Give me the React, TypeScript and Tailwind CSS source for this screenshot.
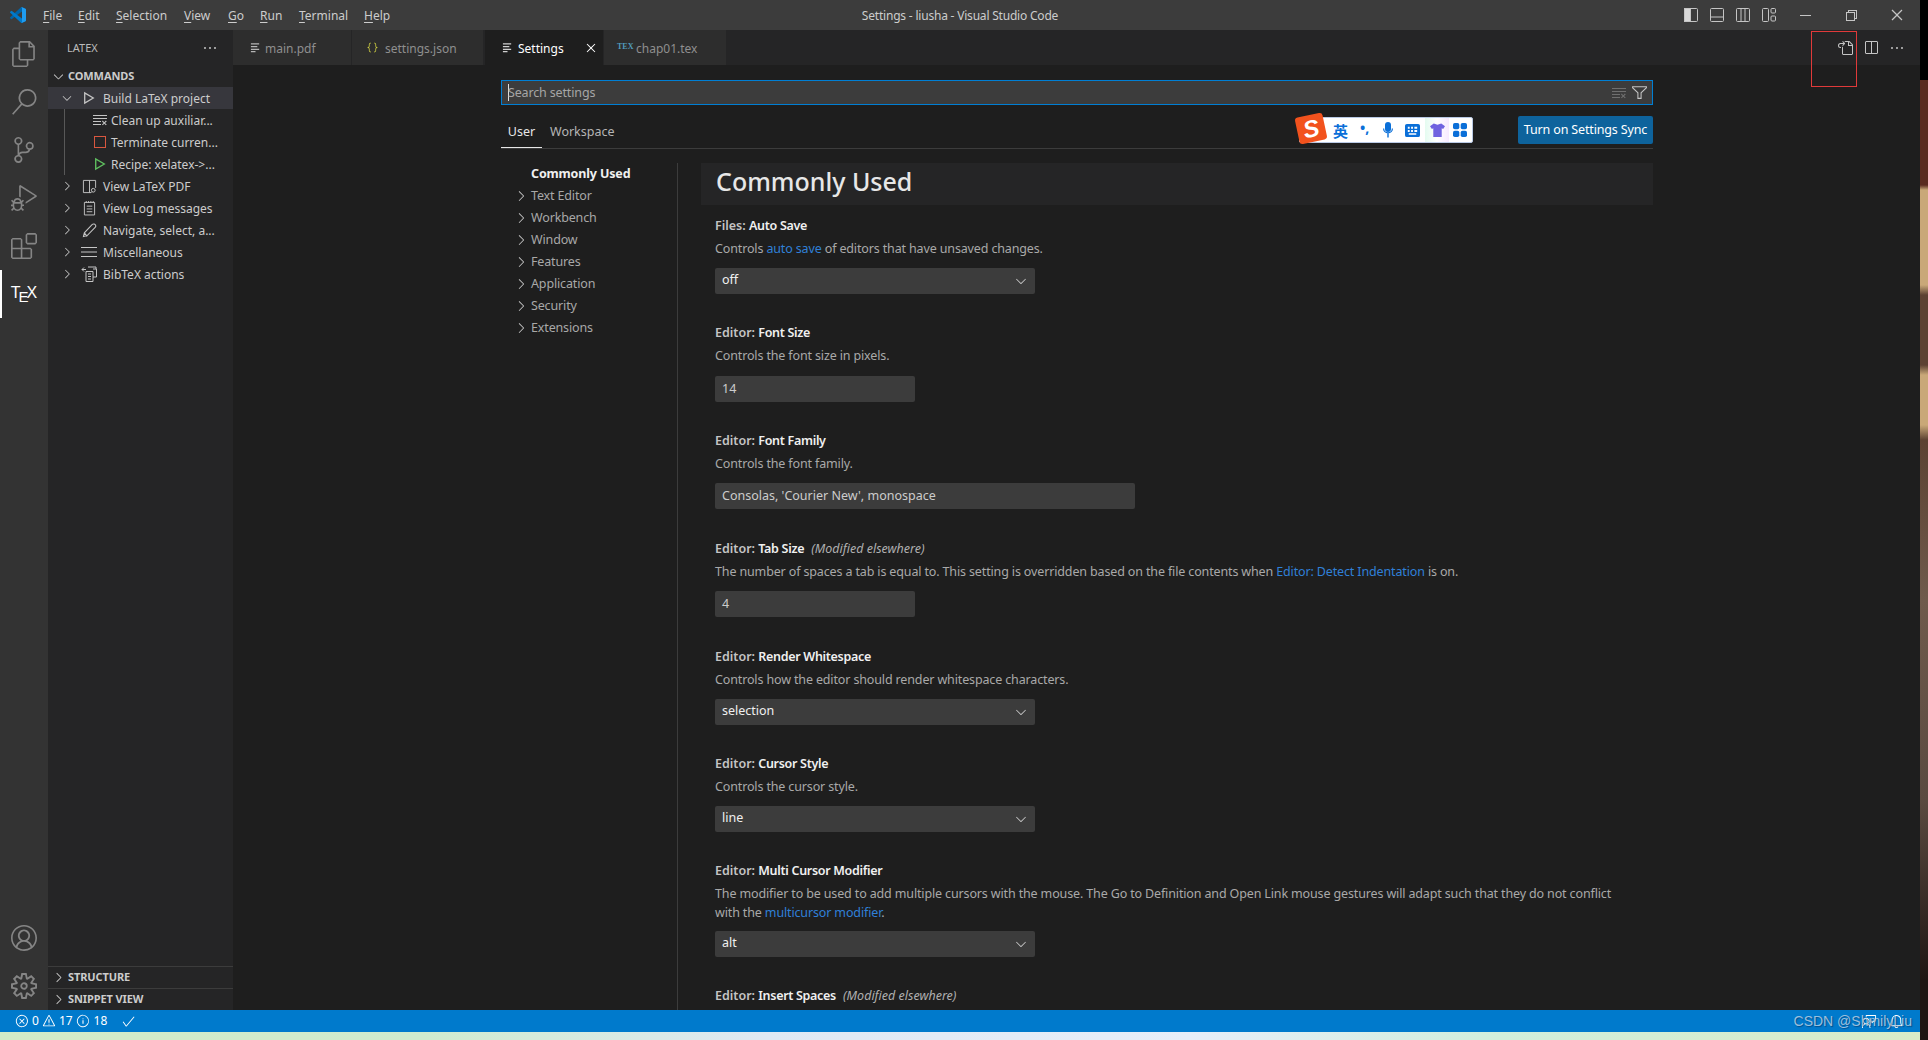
import React from "react";
import {
  VscFiles, VscSearch, VscSourceControl, VscDebugAlt, VscExtensions, VscAccount, VscSettingsGear,
  VscChevronRight, VscChevronDown, VscEllipsis, VscClose, VscChromeMinimize, VscChromeRestore, VscChromeClose,
  VscSplitHorizontal, VscGoToFile,
  VscFilter, VscClearAll, VscError, VscWarning, VscInfo, VscCheck, VscJson, VscFeedback, VscBell,
} from "react-icons/vsc";

const font = "font-['Noto_Sans','Open_Sans',sans-serif]";

function Logo() {
  return (
    <svg viewBox="0 0 100 100" className="w-4 h-4">
      <path fill="#0065A9" d="M96.46 10.8 75.86.88a6.23 6.23 0 0 0-7.1 1.2L1.3 63.6a4.16 4.16 0 0 0 0 6.16l5.5 5a4.16 4.16 0 0 0 5.32.24L93.3 14.37c2.73-2.07 6.64-.12 6.64 3.3v-.24c0-2.4-1.37-4.58-3.48-5.63Z" />
      <path fill="#007ACC" d="M96.46 89.2 75.86 99.12a6.23 6.23 0 0 1-7.1-1.2L1.3 36.4a4.16 4.16 0 0 1 0-6.16l5.5-5a4.16 4.16 0 0 1 5.32-.24L93.3 85.63c2.73 2.07 6.64.12 6.64-3.3v.24c0 2.4-1.37 4.58-3.48 5.63Z" />
      <path fill="#1F9CF0" d="M75.86 99.13a6.22 6.22 0 0 1-7.1-1.2c2.3 2.3 6.24.67 6.24-2.58V4.65c0-3.25-3.94-4.88-6.24-2.58a6.22 6.22 0 0 1 7.1-1.2l20.6 9.9A6.25 6.25 0 0 1 100 16.4v67.2a6.25 6.25 0 0 1-3.54 5.63l-20.6 9.9Z" />
    </svg>
  );
}

function Menu({ k, rest, className }: { k: string; rest: string; className: string }) {
  return (
    <span className={className}>
      <span className="underline underline-offset-2">{k}</span>
      {rest}
    </span>
  );
}

const LayoutSvg = ({ children }: { children: React.ReactNode }) => (
  <svg viewBox="0 0 16 16" className="w-[16px] h-[16px]" fill="none" stroke="#c5c5c5" strokeWidth="1">
    {children}
  </svg>
);

function TitleBar() {
  return (
    <div className="h-[30px] shrink-0 bg-[#3c3c3c] grid grid-cols-[1fr_auto_1fr] items-center text-[#cccccc] text-[12px]">
      <div className="flex items-center">
        <div className="w-[43px] flex justify-start pl-[10px]"><Logo /></div>
        <div className="flex pt-[1px]">
          <Menu k="F" rest="ile" className="w-[35px]" />
          <Menu k="E" rest="dit" className="w-[38px]" />
          <Menu k="S" rest="election" className="w-[68px]" />
          <Menu k="V" rest="iew" className="w-[44px]" />
          <Menu k="G" rest="o" className="w-[32px]" />
          <Menu k="R" rest="un" className="w-[39px]" />
          <Menu k="T" rest="erminal" className="w-[65px]" />
          <Menu k="H" rest="elp" className="w-[40px]" />
        </div>
      </div>
      <div className="text-[12px] tracking-[-0.2px] pt-[1px]">Settings - liusha - Visual Studio Code</div>
      <div className="flex justify-end items-center text-[#c5c5c5]">
        <span className="w-[26px] flex justify-center">
          <LayoutSvg><rect x="1.5" y="1.5" width="13" height="13" rx="1" /><rect x="1.5" y="1.5" width="6" height="13" fill="#d8d8d8" /></LayoutSvg>
        </span>
        <span className="w-[26px] flex justify-center">
          <LayoutSvg><rect x="1.5" y="1.5" width="13" height="13" rx="1" /><path d="M1.5 10h13" /></LayoutSvg>
        </span>
        <span className="w-[26px] flex justify-center">
          <LayoutSvg><rect x="1.5" y="1.5" width="13" height="13" rx="1" /><path d="M10 1.5v13M6 1.5v13" /></LayoutSvg>
        </span>
        <span className="w-[26px] flex justify-center">
          <LayoutSvg><rect x="1.5" y="1.5" width="6" height="13" rx="1" /><rect x="10" y="1.5" width="4.5" height="4.5" rx="1" /><rect x="10" y="9" width="4.5" height="5" rx="1" /></LayoutSvg>
        </span>
        <span className="w-[46px] flex justify-center"><VscChromeMinimize size={16} /></span>
        <span className="w-[46px] flex justify-center"><VscChromeRestore size={16} /></span>
        <span className="w-[46px] flex justify-center"><VscChromeClose size={16} /></span>
      </div>
    </div>
  );
}

function ActivityBar() {
  const top = [VscFiles, VscSearch, VscSourceControl, VscDebugAlt, VscExtensions];
  return (
    <div className="w-[48px] shrink-0 bg-[#333333] flex flex-col text-[#858585]">
      {top.map((I, i) => (
        <div key={i} className="h-[48px] flex items-center justify-center"><I size={26} /></div>
      ))}
      <div className="h-[48px] border-l-2 border-white flex items-center justify-center text-white font-['Liberation_Sans',sans-serif] text-[16px] pr-[2px] pb-[2px]">
        <span>T</span>
        <span className="translate-y-[4px] -ml-[2px] text-[15px]">E</span>
        <span className="-ml-[2px]">X</span>
      </div>
      <div className="flex-1" />
      <div className="h-[48px] flex items-center justify-center"><VscAccount size={26} /></div>
      <div className="h-[48px] flex items-center justify-center"><VscSettingsGear size={26} /></div>
    </div>
  );
}

const BuildIcon = () => (
  <svg viewBox="0 0 14 16" className="w-[12px] h-[14px]" fill="none" stroke="#c5c5c5" strokeWidth="1.5">
    <path d="M2 2v12l10-6z" />
  </svg>
);
const StopIcon = () => <div className="w-[12px] h-[12px] border-[1.5px] border-[#d9573f]" />;
const PlayGreen = () => (
  <svg viewBox="0 0 14 16" className="w-[12px] h-[14px]" fill="none" stroke="#5fbf5f" strokeWidth="1.6">
    <path d="M2 2v12l10-6z" />
  </svg>
);
const PdfIcon = () => (
  <svg viewBox="0 0 16 16" className="w-[15px] h-[15px]" fill="none" stroke="#c5c5c5" strokeWidth="1">
    <path d="M1.5 1.5h13v8M1.5 1.5v13h8M8 1.5v13" />
    <circle cx="12" cy="12" r="2" />
    <path d="M10.5 13.5l-1.5 1.5" />
  </svg>
);
const LogIcon = () => (
  <svg viewBox="0 0 14 16" className="w-[13px] h-[16px]" fill="none" stroke="#c5c5c5" strokeWidth="1">
    <path d="M1.5 2h11v13.5h-11zM3.5 0.5v2M6 .5v2M8.5.5v2M11 .5v2M4 6h6M4 9h6M4 12h6" />
  </svg>
);
const PenIcon = () => (
  <svg viewBox="0 0 16 16" className="w-[15px] h-[15px]" fill="none" stroke="#c5c5c5" strokeWidth="1.1">
    <path d="M1.5 14.5l1-4 8.5-9c1-.8 2.6-.4 3.2.4.6.8.6 2-.2 2.8l-8.5 8.8zM2.5 10.5l3 3.8" />
  </svg>
);
const MiscIcon = () => (
  <svg viewBox="0 0 16 16" className="w-[16px] h-[16px]" fill="none" stroke="#c5c5c5" strokeWidth="1">
    <path d="M0 3.5h16M0 8h16M0 12.5h16" />
  </svg>
);
const BibIcon = () => (
  <svg viewBox="0 0 16 16" className="w-[16px] h-[16px]" fill="none" stroke="#c5c5c5" strokeWidth="1">
    <path d="M5 5.5h7v10H5zM7 8h3M7 10.5h3M7 13h3M12 3h3.5v8H12M5 3.5H1M3 1.5l-2 2 2 2M7 1h8v2" />
  </svg>
);

function Row({ icon, label, open, level2, active }: { icon: React.ReactNode; label: string; open?: boolean; level2?: boolean; active?: boolean }) {
  return (
    <div className={`h-[22px] flex items-center text-[#cccccc] text-[12px] whitespace-nowrap ${active ? "bg-[#37373d]" : ""}`}>
      {level2 ? (
        <>
          <span className="w-[40px] shrink-0" />
          <span className="w-[23px] shrink-0 flex justify-center">{icon}</span>
        </>
      ) : (
        <>
          <span className="w-[12px] shrink-0" />
          <span className="w-[14px] shrink-0 flex justify-center text-[#c5c5c5]">
            {open ? <VscChevronDown size={16} /> : <VscChevronRight size={16} />}
          </span>
          <span className="w-[29px] shrink-0 flex justify-center pl-[1px]">{icon}</span>
        </>
      )}
      <span className="pt-[1px]">{label}</span>
    </div>
  );
}

function SectionHead({ label, open }: { label: string; open?: boolean }) {
  return (
    <div className="h-[22px] flex items-center text-[#cccccc] text-[11px] font-bold tracking-[-0.1px]">
      <span className="w-[20px] shrink-0 flex justify-end pr-[2px]">
        {open ? <VscChevronDown size={15} /> : <VscChevronRight size={15} />}
      </span>
      <span>{label}</span>
    </div>
  );
}

function SideBar() {
  return (
    <div className="w-[185px] shrink-0 bg-[#252526] flex flex-col">
      <div className="h-[35px] shrink-0 flex items-center justify-between pl-[19px] pr-[15px] text-[#bbbbbb] text-[11px]">
        <span className="pt-[1px]">LATEX</span>
        <VscEllipsis size={16} className="text-[#c5c5c5]" />
      </div>
      <div className="flex-1 relative">
        <SectionHead label="COMMANDS" open />
        <Row active open icon={<BuildIcon />} label="Build LaTeX project" />
        <div className="ml-[16px] border-l border-[#585858]">
          <div className="-ml-[17px]">
            <Row level2 icon={<VscClearAll size={16} className="text-[#c5c5c5]" />} label="Clean up auxiliar..." />
            <Row level2 icon={<StopIcon />} label="Terminate curren..." />
            <Row level2 icon={<PlayGreen />} label="Recipe: xelatex->..." />
          </div>
        </div>
        <Row icon={<PdfIcon />} label="View LaTeX PDF" />
        <Row icon={<LogIcon />} label="View Log messages" />
        <Row icon={<PenIcon />} label="Navigate, select, a..." />
        <Row icon={<MiscIcon />} label="Miscellaneous" />
        <Row icon={<BibIcon />} label="BibTeX actions" />
      </div>
      <div className="border-t border-[#3c3c3c] h-[22px] flex items-center"><SectionHead label="STRUCTURE" /></div>
      <div className="border-t border-[#3c3c3c] h-[22px] flex items-center"><SectionHead label="SNIPPET VIEW" /></div>
    </div>
  );
}

function Tab({ icon, label, active, className, close }: { icon: React.ReactNode; label: string; active?: boolean; className: string; close?: boolean }) {
  return (
    <div className={`h-[35px] flex items-center text-[12px] ${active ? "bg-[#1e1e1e] text-white" : "bg-[#2d2d2d] text-[#8f8f8f]"} ${className}`}>
      {icon}
      <span className="pt-[2px]">{label}</span>
      {close && <VscClose size={16} className="ml-auto mr-[4px] text-white" />}
    </div>
  );
}

const FileLines = ({ c }: { c: string }) => (
  <svg viewBox="0 0 12 12" className="w-[11px] h-[11px]" fill="none" stroke={c} strokeWidth="1.3">
    <path d="M1 2h9M1 5h7M1 8h9M1 10.6h5" />
  </svg>
);

function TabBar() {
  return (
    <div className="h-[35px] shrink-0 bg-[#252526] flex items-center">
      <Tab className="w-[119px] pl-[17px] gap-[4px] border-r border-[#252526]" icon={<FileLines c="#b5b5b5" />} label="main.pdf" />
      <Tab className="w-[131px] pl-[14px] gap-[6px]" icon={<VscJson size={13} className="text-[#cbcb41]" />} label="settings.json" />
      <div className="w-[2px]" />
      <Tab active close className="w-[119px] pl-[17px] gap-[5px] border-r border-[#252526] text-[12.5px]" icon={<FileLines c="#d0d0d0" />} label="Settings" />
      <Tab className="w-[122px] pl-[13px] gap-[5px]" icon={<span className="w-[14px] font-['Liberation_Serif',serif] text-[8px] text-[#519aba] -translate-y-[1px] font-bold">TEX</span>} label="chap01.tex" />
      <div className="flex-1" />
      <div className="flex items-center text-[#c5c5c5] pr-[10px]">
        <span className="w-[26px] flex justify-center"><VscGoToFile size={16} /></span>
        <span className="w-[26px] flex justify-center"><VscSplitHorizontal size={16} /></span>
        <span className="w-[26px] flex justify-center"><VscEllipsis size={16} /></span>
      </div>
    </div>
  );
}

function Sogou() {
  return (
    <div className="absolute left-[1064px] top-[50px] h-[30px] flex items-center">
      <div className="ml-[2px] h-[26px] w-[174px] bg-white border border-[#b9c9e4] rounded-[2px] flex items-center text-[#0a6fd8]">
        <span className="w-[33px]" />
        <span className="w-[16px] text-[15px] font-bold font-['Noto_Sans_CJK_SC',sans-serif] leading-none">英</span>
        <span className="w-[29px] text-[14px] font-bold pl-[11px] leading-none -translate-y-[2px]">•,</span>
        <svg viewBox="0 0 12 16" className="w-[12px] h-[16px] ml-[4px]" fill="#0a6fd8">
          <rect x="3" y="0" width="6" height="10" rx="3" />
          <path d="M1 6.5a5 5 0 0 0 10 0h-1.2a3.8 3.8 0 0 1-7.6 0zM5.3 11.5h1.4v4H5.3z" />
        </svg>
        <svg viewBox="0 0 16 16" className="w-[15px] h-[15px] ml-[11px]" fill="#0a6fd8">
          <path fillRule="evenodd" d="M2 1h12a2 2 0 0 1 2 2v10a2 2 0 0 1-2 2H2a2 2 0 0 1-2-2V3a2 2 0 0 1 2-2zm1 3v2h2V4zm3.5 0v2h2V4zM10 4v2h3V4zM3 7.5v2h2v-2zm3.5 0v2h2v-2zm3.5 0v2h3v-2zM4 11v1.5h8V11z" />
        </svg>
        <span className="ml-[5px] w-[24px] h-[24px] bg-[linear-gradient(90deg,#e4fbf0,#ffffff_50%,#f6e9ff)] flex items-center justify-center">
          <svg viewBox="0 0 16 16" className="w-[15px] h-[16px]" fill="#6f63e0">
            <path d="M4 1l4 1.5L12 1l4 3-2 3-1.5-1v9.5h-9V6L2 7 0 4z" />
          </svg>
        </span>
        <svg viewBox="0 0 14 14" className="w-[14px] h-[14px] ml-[4px]" fill="#0a6fd8">
          <rect x="0" y="0" width="6.3" height="6.3" rx="1.8" />
          <rect x="7.7" y="0" width="6.3" height="6.3" rx="1.8" />
          <rect x="0" y="7.7" width="6.3" height="6.3" rx="1.8" />
          <rect x="7.7" y="7.7" width="6.3" height="6.3" rx="1.8" />
        </svg>
      </div>
      <div className="absolute left-0 top-0 w-[28px] h-[27px] rounded-[3px] -rotate-[12deg] bg-[#f2521d] flex items-center justify-center text-white font-black italic text-[24px] leading-none font-['Liberation_Sans',sans-serif]">S</div>
    </div>
  );
}

function Select({ value }: { value: string }) {
  return (
    <div className="w-[320px] h-[26px] bg-[#3c3c3c] rounded-[2px] flex items-center justify-between pl-[7px] pr-[6px] text-[#f0f0f0] text-[12.5px]">
      <span className="pb-[1px]">{value}</span>
      <VscChevronDown size={16} className="text-[#c5c5c5]" />
    </div>
  );
}

function NumInput({ value, w }: { value: string; w: string }) {
  return (
    <div className={`${w} h-[26px] bg-[#3c3c3c] rounded-[2px] flex items-center pl-[7px] text-[#cccccc] text-[12.5px]`}>{value}</div>
  );
}

function Setting({ prefix, name, note, children, control, h, gap }: { prefix: string; name: string; note?: string; children: React.ReactNode; control?: React.ReactNode; h: string; gap: string }) {
  return (
    <div className={h}>
      <div className="h-[18px] leading-[18px] text-[12.5px] font-semibold text-[#c4c4c4] whitespace-nowrap">
        {prefix}: <span className="text-[#f0f0f0] font-semibold tracking-[-0.3px]">{name}</span>
        {note && <span className="ml-[7px] font-normal italic text-[#b0b0b0] text-[12.5px]">{note}</span>}
      </div>
      <div className="mt-[4px] leading-[19px] text-[12.5px] text-[#a9a9a9] whitespace-nowrap tracking-[-0.14px]">{children}</div>
      <div className={gap}>{control}</div>
    </div>
  );
}

const A = ({ children }: { children: React.ReactNode }) => <span className="text-[#3080d8]">{children}</span>;

function Settings() {
  const toc = ["Text Editor", "Workbench", "Window", "Features", "Application", "Security", "Extensions"];
  return (
    <div className="flex-1 min-h-0 bg-[#1e1e1e] relative overflow-hidden">
      <div className="ml-[268px] w-[1152px] h-full flex flex-col">
        <div className="mt-[15px] h-[25px] shrink-0 bg-[#3c3c3c] border border-[#007fd4] flex items-center pl-[6px] pr-[4px]">
          <span className="w-px h-[17px] bg-[#dddddd] -mr-px" />
          <span className="text-[#a6a6a6] text-[12.5px] tracking-[-0.15px] pt-[1px]">Search settings</span>
          <span className="flex-1" />
          <VscClearAll size={16} className="text-[#6f6f6f] mr-[4px]" />
          <VscFilter size={17} className="text-[#c5c5c5]" />
        </div>
        <div className="h-[44px] shrink-0 border-b border-[#3c3c3c] flex items-end justify-between">
          <div className="flex text-[12.5px] h-[33px]">
            <div className="w-[41px] h-[33px] border-b-[1px] border-[#e7e7e7] text-[#e7e7e7] flex justify-center pt-[8px]">User</div>
            <div className="pl-[8px] text-[#b5b5b5] pt-[8px]">Workspace</div>
          </div>
          <div className="mb-[4px] w-[135px] h-[28px] bg-[#0e639c] rounded-[2px] text-white text-[12.5px] flex items-center justify-center whitespace-nowrap tracking-[-0.15px]">Turn on Settings Sync</div>
        </div>
        <div className="flex-1 min-h-0 flex">
          <div className="w-[177px] shrink-0 mt-[14px] border-r border-[#3c3c3c] text-[12.5px] text-[#a8a8a8] tracking-[-0.15px]">
            <div className="h-[22px] flex items-center pl-[30px] text-[#f0f0f0] font-bold text-[12.5px] tracking-[-0.15px]">Commonly Used</div>
            {toc.map((t) => (
              <div key={t} className="h-[22px] flex items-center pl-[10px]">
                <VscChevronRight size={16} className="w-[20px] shrink-0 text-[#c5c5c5]" />
                <span>{t}</span>
              </div>
            ))}
          </div>
          <div className="ml-[23px] flex-1 min-w-0 mt-[14px] overflow-hidden">
            <div className="h-[42px] bg-[#252526] text-[#e7e7e7] text-[25px] font-medium pl-[15px] pb-[4px] flex items-center">Commonly Used</div>
            <div className="pl-[14px] pt-[12px]">
              <Setting h="h-[107px]" gap="mt-[10px]" prefix="Files" name="Auto Save" control={<Select value="off" />}>
                Controls <A>auto save</A> of editors that have unsaved changes.
              </Setting>
              <Setting h="h-[108px]" gap="mt-[11px]" prefix="Editor" name="Font Size" control={<NumInput value="14" w="w-[200px]" />}>
                Controls the font size in pixels.
              </Setting>
              <Setting h="h-[108px]" gap="mt-[10px]" prefix="Editor" name="Font Family" control={<NumInput value="Consolas, 'Courier New', monospace" w="w-[420px]" />}>
                Controls the font family.
              </Setting>
              <Setting h="h-[108px]" gap="mt-[10px]" prefix="Editor" name="Tab Size" note="(Modified elsewhere)" control={<NumInput value="4" w="w-[200px]" />}>
                The number of spaces a tab is equal to. This setting is overridden based on the file contents when <A>Editor: Detect Indentation</A> is on.
              </Setting>
              <Setting h="h-[107px]" gap="mt-[10px]" prefix="Editor" name="Render Whitespace" control={<Select value="selection" />}>
                Controls how the editor should render whitespace characters.
              </Setting>
              <Setting h="h-[107px]" gap="mt-[10px]" prefix="Editor" name="Cursor Style" control={<Select value="line" />}>
                Controls the cursor style.
              </Setting>
              <Setting h="h-[125px]" gap="mt-[9px]" prefix="Editor" name="Multi Cursor Modifier" control={<Select value="alt" />}>
                The modifier to be used to add multiple cursors with the mouse. The Go to Definition and Open Link mouse gestures will adapt such that they do not conflict
                <br />
                with the <A>multicursor modifier</A>.
              </Setting>
              <Setting h="h-[107px]" gap="mt-[9px]" prefix="Editor" name="Insert Spaces" note="(Modified elsewhere)">
                {" "}
              </Setting>
            </div>
          </div>
        </div>
      </div>
      <Sogou />
    </div>
  );
}

function StatusBar() {
  return (
    <div className="h-[22px] shrink-0 bg-[#007acc] text-white text-[12px] flex items-center pl-[15px] relative">
      <VscError size={14} />
      <span className="ml-[3px]">0</span>
      <VscWarning size={14} className="ml-[3px]" />
      <span className="ml-[3px]">17</span>
      <VscInfo size={14} className="ml-[3px]" />
      <span className="ml-[4px]">18</span>
      <VscCheck size={15} className="ml-[14px]" />
      <div className="flex-1" />
      <VscFeedback size={15} className="mr-[12px]" />
      <VscBell size={15} className="mr-[16px]" />
      <span className="absolute right-[8px] top-[3px] text-[14px] leading-[16px] font-['Liberation_Sans',sans-serif] text-[#c5d6e6]/80 [text-shadow:1px_1px_1px_rgba(0,40,80,0.5)]">CSDN @ShmilyLiu</span>
    </div>
  );
}

export default function App() {
  return (
    <div className={`w-[1928px] h-[1040px] flex overflow-hidden ${font}`}>
      <div className="w-[1920px] shrink-0 flex flex-col relative">
        <TitleBar />
        <div className="flex-1 min-h-0 flex">
          <ActivityBar />
          <SideBar />
          <div className="flex-1 min-w-0 flex flex-col">
            <TabBar />
            <Settings />
          </div>
        </div>
        <StatusBar />
        <div className="h-[8px] shrink-0 bg-[linear-gradient(90deg,#d2ecc8_0%,#cfeccf_22%,#dfe9f4_40%,#e6eef9_62%,#d0efdc_78%,#d8ecc8_100%)]" />
        <div className="absolute left-[1811px] top-[31px] w-[46px] h-[56px] border border-[#e03a3a]" />
      </div>
      <div className="flex-1 bg-[linear-gradient(180deg,#000_0,#000_80px,#5a2a20_80px,#5a2a20_185px,#c9a878_190px,#c9a878_285px,#5c4232_295px,#5c4232_365px,#c9a878_375px,#c9a878_425px,#5c4232_440px,#6f5a4c_600px,#5a4a40_800px,#1f1512_980px,#1f1512_1040px)]" />
    </div>
  );
}
